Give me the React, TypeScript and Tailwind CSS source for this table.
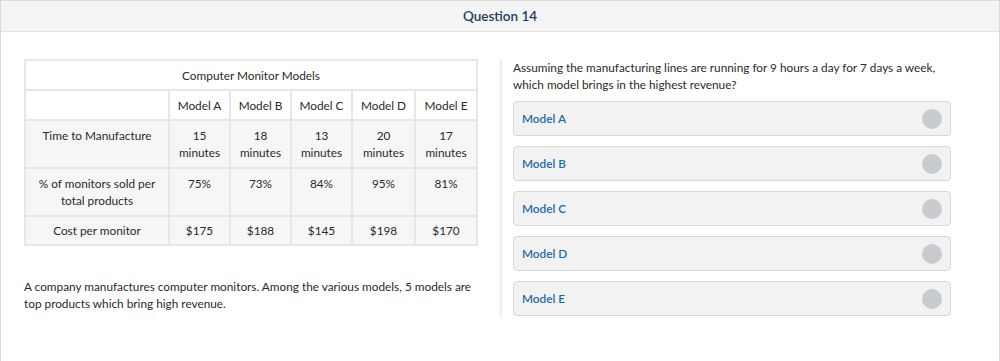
import React from "react";

const models = ["Model A", "Model B", "Model C", "Model D", "Model E"];

export default function App() {
  const font = { fontFamily: "Lato, 'Open Sans', sans-serif" };
  const cell = "border-2 border-[#e6e6e6] align-top px-1 pt-[6px] pb-[6px] text-center";
  return (
    <div className="w-[1000px] h-[361px] bg-white text-[#2a2a2a] text-[11.8px] leading-[17px]" style={font}>
      <div className="h-full border-l border-r border-t border-[#dcdcdc] flex flex-col">
        <div className="h-[31px] bg-[#f4f4f4] border-b border-[#e2e2e2] flex items-center justify-center shrink-0">
          <span className="text-[#1d3b5e] text-[13.5px] font-semibold">Question 14</span>
        </div>
        <div className="flex pt-[27px]">
          <div className="w-[499px] pl-[23px] pr-[24px]">
            <table className="border-collapse w-[452px] table-fixed">
              <colgroup>
                <col className="w-[144px]" />
                <col className="w-[61px]" />
                <col className="w-[61px]" />
                <col className="w-[61px]" />
                <col className="w-[63px]" />
                <col className="w-[62px]" />
              </colgroup>
              <tbody>
                <tr className="h-[30px] bg-white">
                  <td colSpan={6} className="border-2 border-[#e6e6e6] text-center align-middle">Computer Monitor Models</td>
                </tr>
                <tr className="h-[30px] bg-white">
                  <td className="border-2 border-[#e6e6e6]"></td>
                  {models.map((m) => (
                    <td key={m} className="border-2 border-[#e6e6e6] text-center align-middle">{m}</td>
                  ))}
                </tr>
                <tr className="h-[46px] bg-[#f6f6f6]">
                  <td className={cell}>Time to Manufacture</td>
                  {["15", "18", "13", "20", "17"].map((v) => (
                    <td key={v} className={cell}>{v}<br />minutes</td>
                  ))}
                </tr>
                <tr className="h-[46px] bg-[#f6f6f6]">
                  <td className={cell}>% of monitors sold per total products</td>
                  {["75%", "73%", "84%", "95%", "81%"].map((v) => (
                    <td key={v} className={cell}>{v}</td>
                  ))}
                </tr>
                <tr className="h-[29px] bg-[#f6f6f6]">
                  <td className="border-2 border-[#e6e6e6] text-center align-middle">Cost per monitor</td>
                  {["$175", "$188", "$145", "$198", "$170"].map((v) => (
                    <td key={v} className="border-2 border-[#e6e6e6] text-center align-middle">{v}</td>
                  ))}
                </tr>
              </tbody>
            </table>
            <p className="mt-[32px]">
              A company manufactures computer monitors. Among the various models, 5 models are top products which bring high revenue.
            </p>
          </div>
          <div className="border-l-2 border-[#eeeeee] pl-[11px] w-[451px] h-[259px]">
            <p>
              Assuming the manufacturing lines are running for 9 hours a day for 7 days a week, which model brings in the highest revenue?
            </p>
            <div className="mt-[8px] flex flex-col gap-[10px]">
              {models.map((m) => (
                <div key={m} className="h-[35px] bg-[#f2f2f2] border border-[#d8d8d8] rounded-[4px] flex items-center justify-between pl-[8px] pr-[8px]">
                  <span className="text-[#1b6ca8] font-semibold">{m}</span>
                  <span className="w-[20px] h-[20px] rounded-full bg-[#c8cbcf]"></span>
                </div>
              ))}
            </div>
          </div>
        </div>
      </div>
    </div>
  );
}
